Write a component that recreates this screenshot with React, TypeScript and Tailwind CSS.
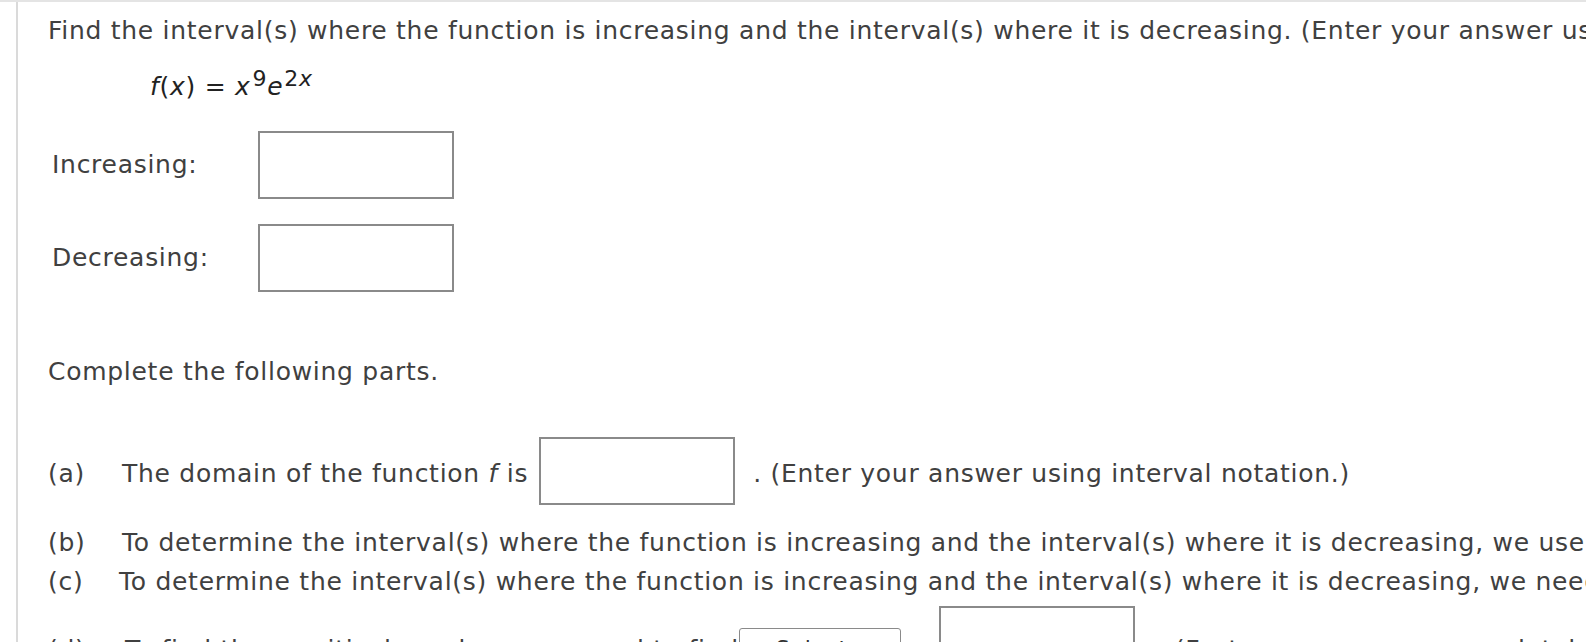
import React from "react";

const font = { fontFamily: '"DejaVu Sans", Verdana, sans-serif', letterSpacing: "0.72px" };

function AnswerBox({ className = "" }: { className?: string }) {
  return <div className={`w-[196px] h-[68px] shrink-0 border-2 border-[#8a8a8a] bg-white ${className}`} />;
}

export default function App() {
  return (
    <div className="h-[642px] w-[1586px] overflow-hidden bg-white border-t-2 border-[#e4e4e4] text-[25px] text-[#404040]" style={font}>
      <div className="pl-[16px]">
        <div className="border-l-2 border-[#dadada] pl-[30px] h-[640px] whitespace-nowrap overflow-hidden">
          <p className="mt-[14px] leading-[30px]">
            Find the interval(s) where the function is increasing and the interval(s) where it is decreasing. (Enter your answer using
          </p>

          <p className="mt-[26px] pl-[102px] leading-[30px] text-[#222]">
            <i>f</i>(<i>x</i>) = <i>x</i>
            <sup className="text-[22px] relative -top-[9px] ml-[2px]">9</sup>
            <i>e</i>
            <sup className="text-[22px] relative -top-[9px] ml-[1px]">
              2<i>x</i>
            </sup>
          </p>

          <div className="mt-[29px] flex items-center">
            <span className="w-[210px] shrink-0 pl-[4px]">Increasing:</span>
            <AnswerBox />
          </div>
          <div className="mt-[25px] flex items-center">
            <span className="w-[210px] shrink-0 pl-[4px]">Decreasing:</span>
            <AnswerBox />
          </div>

          <p className="mt-[65px] leading-[30px]">Complete the following parts.</p>

          <div className="mt-[50px] flex items-center">
            <span className="w-[74px] shrink-0 mt-[6px]">(a)</span>
            <span className="mr-[11px] shrink-0 mt-[6px]">
              The domain of the function <i>f</i> is
            </span>
            <AnswerBox />
            <span className="ml-[18px] shrink-0 mt-[6px]">. (Enter your answer using interval notation.)</span>
          </div>

          <div className="mt-[23px] flex leading-[30px]">
            <span className="w-[74px] shrink-0">(b)</span>
            <span className="shrink-0">To determine the interval(s) where the function is increasing and the interval(s) where it is decreasing, we use th</span>
          </div>
          <div className="mt-[9px] flex leading-[30px]">
            <span className="w-[71px] shrink-0">(c)</span>
            <span className="shrink-0">To determine the interval(s) where the function is increasing and the interval(s) where it is decreasing, we need</span>
          </div>

          <div className="mt-[9px] flex items-start">
            <span className="w-[77px] shrink-0 mt-[25px]">(d)</span>
            <span className="mt-[25px] shrink-0">To find these critical numbers, we need to find</span>
            <div className="mt-[22px] w-[162px] h-[40px] shrink-0 border border-[#8a8a8a] rounded-[3px] flex items-center justify-between pl-[36px] pr-[10px] text-[22px] text-[#333]">
              <span>Select</span>
              <span className="text-[14px] text-[#777]">⌄</span>
            </div>
            <AnswerBox className="ml-[38px]" />
            <span className="ml-[40px] mt-[25px] shrink-0">(Factor your answer completely.)</span>
          </div>
        </div>
      </div>
    </div>
  );
}
